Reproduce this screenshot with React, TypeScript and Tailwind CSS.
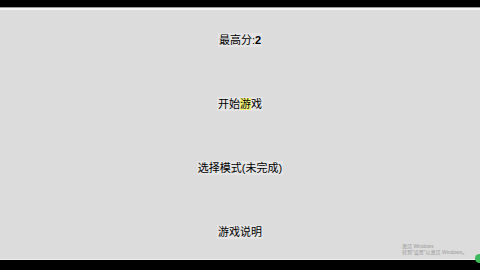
import React from 'react'

const font = { fontFamily: '"Liberation Sans", "Noto Sans CJK SC", sans-serif' }

function MenuItem({ children }: { children: React.ReactNode }) {
  return (
    <div className="h-[16px] flex justify-center items-center">
      <span className="px-[1px] bg-[#e4e4e4] text-[11px] leading-[14px] text-black">{children}</span>
    </div>
  )
}

export default function App() {
  return (
    <div className="w-[480px] h-[270px] bg-black flex flex-col overflow-hidden" style={font}>
      <div className="h-[7px] bg-black" />
      <div className="h-[1px] bg-[#9a9a9a]" />
      <div className="h-[2px] bg-[#f4f4f4]" />

      {/* Main game menu */}
      <div className="relative flex-1 bg-[#dcdcdc] flex flex-col pt-[22px] gap-[48px]">
        <MenuItem>
          最高分:<span className="font-bold">2</span>
        </MenuItem>
        <MenuItem>
          开始<span className="bg-[#f2f27a]">游</span>戏
        </MenuItem>
        <MenuItem>选择模式(未完成)</MenuItem>
        <MenuItem>游戏说明</MenuItem>

        {/* Windows activation watermark */}
        <div className="absolute left-[402px] top-[233px] text-[#9a9a9a] text-[5px] leading-[6px]">
          <div>激活 Windows</div>
          <div>转到"设置"以激活 Windows。</div>
        </div>
        <div className="absolute right-[-4px] bottom-[-4px] w-[9px] h-[9px] rounded-full bg-[#3cb95a]" />
      </div>

      <div className="h-[1px] bg-[#eeeeee]" />
      <div className="h-[10px] bg-black" />
    </div>
  )
}
